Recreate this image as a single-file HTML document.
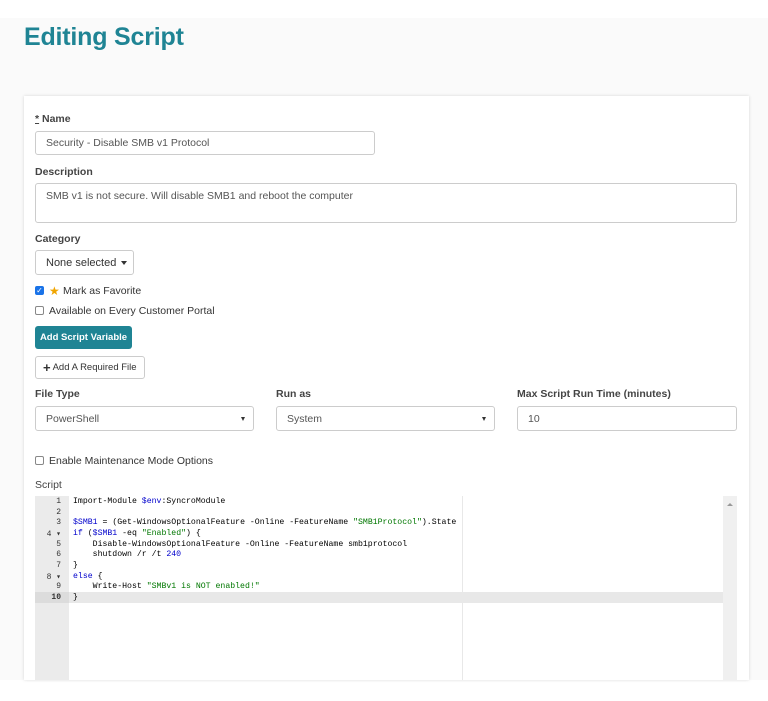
<!DOCTYPE html>
<html><head><style>
*{box-sizing:border-box;margin:0;padding:0}
body{width:768px;height:701px;background:#fff;font-family:"Liberation Sans",sans-serif;position:relative;overflow:hidden;color:#333}
.bg{position:absolute;left:0;top:18px;width:768px;height:662px;background:#fafafa}
h1{position:absolute;left:24px;top:23px;font-size:25px;font-weight:bold;color:#1f8494;letter-spacing:-0.2px}
.card{position:absolute;left:24px;top:96px;width:725px;height:584px;background:#fff;box-shadow:0 0 3px rgba(0,0,0,.15)}
.a{position:absolute;font-size:10.5px}
.lbl{font-weight:bold;color:#444}
.inp{position:absolute;border:1px solid #ccc;border-radius:3px;background:#fff;font-size:10.5px;color:#555;padding-left:10px;display:flex;align-items:center}
.cb{position:absolute;width:9px;height:9px;border:1px solid #888;border-radius:2px;background:#fff}
.caret{position:absolute;right:8px;top:50%;margin-top:-2px;border-left:2px solid transparent;border-right:2px solid transparent;border-top:4px solid #333}
.ed{position:absolute;left:35px;top:496px;width:702px;height:184px;background:#fff}
.gut{position:absolute;left:0;top:0;width:34px;height:184px;background:#ebebeb}
.ln{position:absolute;left:0;width:26px;text-align:right;font-family:"Liberation Mono",monospace;font-size:8px;color:#333}
.code{position:absolute;left:38px;font-family:"Liberation Mono",monospace;font-size:8.2px;color:#000;white-space:pre}
.k{color:#00c}.s{color:#070}.n{color:#00c}
</style></head><body>
<div class="bg"></div>
<h1>Editing Script</h1>
<div class="card"></div>
<div class="a lbl" style="left:35px;top:113px"><u>*</u> Name</div>
<div class="inp" style="left:35px;top:131px;width:340px;height:24px">Security - Disable SMB v1 Protocol</div>
<div class="a lbl" style="left:35px;top:166px">Description</div>
<div class="inp" style="left:35px;top:183px;width:702px;height:40px;align-items:flex-start;padding-top:6px">SMB v1 is not secure. Will disable SMB1 and reboot the computer</div>
<div class="a lbl" style="left:35px;top:233px">Category</div>
<div class="inp" style="left:35px;top:250px;width:99px;height:25px;color:#333;font-size:11px">None selected <span style="display:inline-block;margin-left:5px;border-left:3px solid transparent;border-right:3px solid transparent;border-top:4px solid #333"></span></div>
<div class="cb" style="left:35px;top:286px;background:#1a73e8;border-color:#1a73e8;color:#fff;font-size:8px;line-height:7px;text-align:center">✓</div>
<div class="a" style="left:49px;top:284px;color:#f0a500;font-size:12px">★</div>
<div class="a" style="left:63px;top:285px">Mark as Favorite</div>
<div class="cb" style="left:35px;top:306px"></div>
<div class="a" style="left:49px;top:305px">Available on Every Customer Portal</div>
<div class="a" style="left:35px;top:326px;width:97px;height:23px;background:#1f8494;color:#fff;border-radius:3px;font-weight:bold;font-size:9.5px;text-align:center;line-height:23px">Add Script Variable</div>
<div class="inp" style="left:35px;top:356px;width:110px;height:23px;color:#333;font-size:9.5px;padding-left:7px"><b style="font-size:13px;margin-right:2px">+</b>Add A Required File</div>
<div class="a lbl" style="left:35px;top:388px">File Type</div>
<div class="a lbl" style="left:276px;top:388px">Run as</div>
<div class="a lbl" style="left:517px;top:388px">Max Script Run Time (minutes)</div>
<div class="inp" style="left:35px;top:406px;width:219px;height:25px">PowerShell<span class="caret"></span></div>
<div class="inp" style="left:276px;top:406px;width:219px;height:25px">System<span class="caret"></span></div>
<div class="inp" style="left:517px;top:406px;width:220px;height:25px">10</div>
<div class="cb" style="left:35px;top:456px"></div>
<div class="a" style="left:49px;top:455px">Enable Maintenance Mode Options</div>
<div class="a lbl" style="left:35px;top:479px;font-weight:normal">Script</div>
<div class="ed">
<div class="gut"></div>
<div style="position:absolute;left:0;top:96px;width:688px;height:11px;background:#e8e8e8"></div>
<div style="position:absolute;left:0;top:96px;width:34px;height:11px;background:#dcdcdc"></div>
<div style="position:absolute;left:427px;top:0;width:1px;height:184px;background:#e8e8e8"></div>
<div style="position:absolute;right:0;top:0;width:14px;height:184px;background:#f0f0f0"><div style="position:absolute;left:4px;top:7px;border-left:3px solid transparent;border-right:3px solid transparent;border-bottom:3px solid #999"></div></div>
<div class="ln" style="top:1px">1</div><div class="ln" style="top:12px">2</div><div class="ln" style="top:22px">3</div><div class="ln" style="top:33px">4 ▾</div><div class="ln" style="top:44px">5</div><div class="ln" style="top:54px">6</div><div class="ln" style="top:65px">7</div><div class="ln" style="top:76px">8 ▾</div><div class="ln" style="top:86px">9</div><div class="ln" style="top:97px;font-weight:bold">10</div>
<div class="code" style="top:1px">Import-Module <span class="n">$env</span>:SyncroModule</div>
<div class="code" style="top:22px"><span class="n">$SMB1</span> = (Get-WindowsOptionalFeature -Online -FeatureName <span class="s">"SMB1Protocol"</span>).State</div>
<div class="code" style="top:33px"><span class="k">if</span> (<span class="n">$SMB1</span> -eq <span class="s">"Enabled"</span>) {</div>
<div class="code" style="top:44px">    Disable-WindowsOptionalFeature -Online -FeatureName smb1protocol</div>
<div class="code" style="top:54px">    shutdown /r /t <span class="n">240</span></div>
<div class="code" style="top:65px">}</div>
<div class="code" style="top:76px"><span class="k">else</span> {</div>
<div class="code" style="top:86px">    Write-Host <span class="s">"SMBv1 is NOT enabled!"</span></div>
<div class="code" style="top:97px">}</div>
</div>
</body></html>
